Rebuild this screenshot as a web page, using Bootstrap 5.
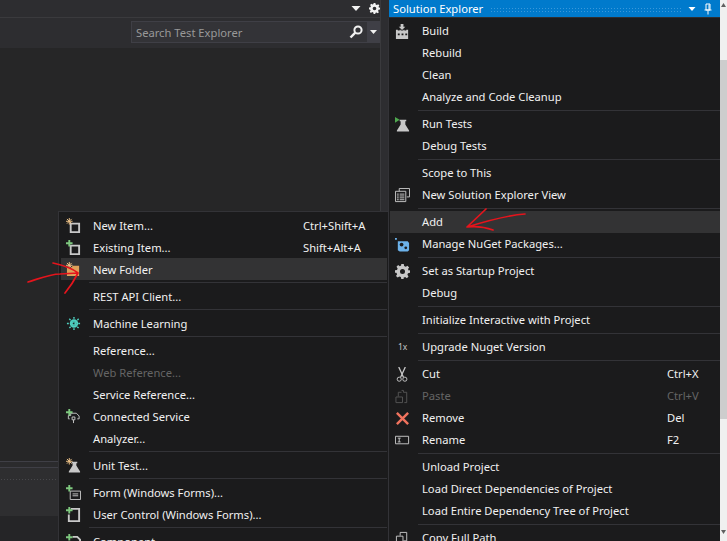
<!DOCTYPE html>
<html lang="en">
<head>
<meta charset="utf-8">
<title>Solution Explorer context menu</title>
<link href="https://cdn.jsdelivr.net/npm/bootstrap@5.3.0/dist/css/bootstrap.min.css" rel="stylesheet">
<style>
html,body{height:541px;overflow:hidden;background:#2d2d30;}
body{font-family:"Noto Sans","Open Sans",sans-serif;font-size:11.2px;color:#f1f1f1;line-height:23px;}
.ide{width:727px;height:541px;position:relative;overflow:hidden;}
.ide-left{width:381px;height:541px;background:#252526;border-right:1px solid #3a3a3d;}
.top-strip{height:18px;background:#2d2d30;gap:8px;border-bottom:1px solid #3a3a3d;}
.search-row{height:30px;background:#2d2d30;padding-top:3px;}
.search-box{width:249px;height:22px;margin-left:131px;background:#333337;border:1px solid #3f3f46;color:#999;line-height:22px;padding-left:4px;}
.search-go{width:12px;background:#3f3f46;}
.tool-a{height:413px;background:#262627;}
.lower-bar{height:7px;background:#2b2b2d;border-top:1px solid #3f3f46;border-bottom:1px solid #3f3f46;}
.lower-dots{height:48px;background-color:#2e2e30;background-image:radial-gradient(#47474b .6px,transparent .7px);background-size:3px 3px;background-repeat:repeat-x;background-position:0 10px;}
.lower-body{background:#252527;}
.se-head{position:absolute;left:389px;top:0;width:331px;height:17px;background:#007acc;color:#fff;line-height:23px;padding-left:4px;overflow:hidden;}
.se-dots{height:6px;margin:3px 7px 0 7px;background-image:radial-gradient(#3a98da .6px,transparent .7px);background-size:3px 3px;}
.scroll-track{position:absolute;left:720px;top:0;width:7px;height:541px;background:#f0f0f0;padding-top:60px;}
.scroll-thumb{height:359px;background:#cdcdcd;}
.scroll-arrow{position:absolute;left:1px;}
.arrow-up{top:3px;}
.arrow-down{bottom:7px;}
.ctx{position:absolute;background:#1b1b1c;}
.ctx-main{left:388px;top:18px;width:332px;height:523px;padding:2px 0 0 1px;border-left:1px solid #333337;line-height:22px;}
.ctx-sub{left:58px;top:211px;width:331px;height:330px;border:1px solid #333337;border-bottom:0;padding:2px 1px 0 2px;}
.mi{height:22px;white-space:nowrap;}
.mi.sel{background:#333334;}
.mi.off{color:#656565;}
.mi-ico{width:28px;flex:0 0 28px;height:22px;padding-left:5px;}
.mi-ico svg{width:15px;height:15px;}
.mi-txt{flex:1 1 auto;padding-left:4px;}
.mi-key{width:53px;flex:0 0 auto;}
.sub-key{width:84px;}
.msep{height:1px;background:#333337;margin:2px 0 2px 28px;}
.mini-x{font-size:8.500px;color:#c8c8c8;padding-left:3px;line-height:22px;display:block;}
.arrow-ink{position:absolute;left:0;top:0;pointer-events:none;}
svg{display:block;}
</style>
</head>
<body>
<div class="ide">
  <div class="ide-left d-flex flex-column">
    <div class="top-strip d-flex justify-content-end align-items-center">
      <svg width="10" height="5" viewBox="0 0 9 5"><path d="M0 0h9L4.500 5z" fill="#f1f1f1"/></svg>
      <svg width="11" height="11" viewBox="0 0 12 12"><path fill="#f1f1f1" fill-rule="evenodd" d="M5 0h2l.3 1.600 1.300.6L10 1.300l1.300 1.400-.9 1.300.5 1.100L12 5v2l-1.600.3-.5 1.300.9 1.400-1.300 1.300-1.400-.9-1.300.5L7 12H5l-.3-1.600-1.200-.5-1.400.9L.8 9.500l.9-1.300-.6-1.200L0 7V5l1.600-.3.5-1.200-.9-1.400L2.500.8l1.300.9 1.100-.5zM6 4a2 2 0 100 4 2 2 0 000-4z"/></svg>
    </div>
    <div class="search-row">
      <div class="search-box d-flex justify-content-between">
        <span>Search Test Explorer</span>
        <div class="d-flex align-items-center gap-1 h-100">
          <svg width="14" height="14" viewBox="0 0 14 14"><circle cx="9" cy="5" r="3.600" fill="none" stroke="#f1f1f1" stroke-width="2"/><path d="M6.300 7.700L1.500 12.500" stroke="#f1f1f1" stroke-width="2.400"/></svg>
          <div class="search-go d-flex align-items-center justify-content-center h-100"><svg width="7" height="4" viewBox="0 0 7 4"><path d="M0 0h7L3.500 4z" fill="#f1f1f1"/></svg></div>
        </div>
      </div>
    </div>
    <div class="tool-a"></div>
    <div class="lower-bar"></div>
    <div class="lower-dots"></div>
    <div class="lower-body flex-grow-1"></div>
  </div>

  <div class="se-head d-flex align-items-center">
    <span>Solution Explorer</span>
    <div class="se-dots flex-grow-1"></div>
    <svg class="me-2" width="8" height="4" viewBox="0 0 7 4"><path d="M0 0h7L3.500 4z" fill="#fff"/></svg>
    <svg class="me-2" width="8" height="12" viewBox="0 0 8 11"><path fill="none" stroke="#fff" d="M2 .5h4v6H2zM.5 6.500h7M4 7v4M5 1v5"/></svg>
  </div>

  <div class="scroll-track">
    <svg class="scroll-arrow arrow-up" width="5" height="4" viewBox="0 0 5 4"><path d="M0 4L2.500 0 5 4z" fill="#606060"/></svg>
    <div class="scroll-thumb"></div>
    <svg class="scroll-arrow arrow-down" width="5" height="4" viewBox="0 0 5 4"><path d="M0 0h5L2.500 4z" fill="#606060"/></svg>
  </div>

  <div class="ctx ctx-main">
    <div class="mi d-flex"><div class="mi-ico d-flex align-items-center"><svg viewBox="0 0 16 16"><path fill="#c8c8c8" d="M6 0h3v3h2L7.500 6.500 4 3h2zM1 6h2v1h2V6h1v1h3V6h1v1h2V6h2v10H1z"/><path fill="#1b1b1c" d="M3 10h2v2H3zM7 10h2v2H7zM11 10h2v2h-2z"/></svg></div><div class="mi-txt">Build</div></div>
    <div class="mi d-flex"><div class="mi-ico"></div><div class="mi-txt">Rebuild</div></div>
    <div class="mi d-flex"><div class="mi-ico"></div><div class="mi-txt">Clean</div></div>
    <div class="mi d-flex"><div class="mi-ico"></div><div class="mi-txt">Analyze and Code Cleanup</div></div>
    <div class="msep"></div>
    <div class="mi d-flex"><div class="mi-ico d-flex align-items-center"><svg viewBox="0 0 16 16"><path fill="#c8c8c8" d="M5 3h7v1.500h-1V8l4 6.500v1H2v-1L6 8V4.500H5z"/><path fill="#4ea74e" d="M0 0l5 3-5 3z"/></svg></div><div class="mi-txt">Run Tests</div></div>
    <div class="mi d-flex"><div class="mi-ico"></div><div class="mi-txt">Debug Tests</div></div>
    <div class="msep"></div>
    <div class="mi d-flex"><div class="mi-ico"></div><div class="mi-txt">Scope to This</div></div>
    <div class="mi d-flex"><div class="mi-ico d-flex align-items-center"><svg viewBox="0 0 16 16"><path fill="none" stroke="#c8c8c8" d="M4.500 3.500V.5h11v9h-3M.5 3.500h11v11H.500z"/><path stroke="#c8c8c8" d="M2 6.500h2M5 6.500h5M2 8.500h2M5 8.500h5M2 10.500h2M5 10.500h5M2 12.500h2M5 12.500h5"/></svg></div><div class="mi-txt">New Solution Explorer View</div></div>
    <div class="msep"></div>
    <div class="mi sel d-flex"><div class="mi-ico"></div><div class="mi-txt">Add</div></div>
    <div class="mi d-flex"><div class="mi-ico d-flex align-items-center"><svg viewBox="0 0 16 16"><path fill="#6cb2ea" d="M3 4.500h10.500l1.500 2V14l-1.500 1.500H5L3 14z"/><circle cx="7" cy="8" r="2" fill="#1b1b1c"/><circle cx="11.500" cy="11.500" r="1.500" fill="#1b1b1c"/><path fill="#6cb2ea" d="M0 1h2v2H0z"/></svg></div><div class="mi-txt">Manage NuGet Packages...</div></div>
    <div class="msep"></div>
    <div class="mi d-flex"><div class="mi-ico d-flex align-items-center"><svg viewBox="0 0 12 12"><path fill="#c8c8c8" fill-rule="evenodd" d="M5 0h2l.3 1.600 1.300.6L10 1.300l1.300 1.400-.9 1.300.5 1.100L12 5v2l-1.600.3-.5 1.300.9 1.400-1.300 1.300-1.400-.9-1.300.5L7 12H5l-.3-1.600-1.200-.5-1.400.9L.8 9.500l.9-1.300-.6-1.200L0 7V5l1.600-.3.5-1.200-.9-1.400L2.500.8l1.300.9 1.100-.5zM6 4a2 2 0 100 4 2 2 0 000-4z"/></svg></div><div class="mi-txt">Set as Startup Project</div></div>
    <div class="mi d-flex"><div class="mi-ico"></div><div class="mi-txt">Debug</div></div>
    <div class="msep"></div>
    <div class="mi d-flex"><div class="mi-ico"></div><div class="mi-txt">Initialize Interactive with Project</div></div>
    <div class="msep"></div>
    <div class="mi d-flex"><div class="mi-ico"><span class="mini-x">1x</span></div><div class="mi-txt">Upgrade Nuget Version</div></div>
    <div class="msep"></div>
    <div class="mi d-flex"><div class="mi-ico d-flex align-items-center"><svg viewBox="0 0 16 16"><path d="M4 0l5 11M11 0L6 11" stroke="#c8c8c8" stroke-width="1.400" fill="none"/><circle cx="4.500" cy="13" r="2.200" fill="none" stroke="#c8c8c8"/><circle cx="10.500" cy="13" r="2.200" fill="none" stroke="#c8c8c8"/></svg></div><div class="mi-txt">Cut</div><div class="mi-key">Ctrl+X</div></div>
    <div class="mi off d-flex"><div class="mi-ico d-flex align-items-center"><svg viewBox="0 0 16 16"><path fill="none" stroke="#555" d="M7 1.500h2v2h3.500v11H10M3.500 8V3.500H7M1 8.500h7v6H1z"/></svg></div><div class="mi-txt">Paste</div><div class="mi-key">Ctrl+V</div></div>
    <div class="mi d-flex"><div class="mi-ico d-flex align-items-center"><svg viewBox="0 0 16 16"><path d="M2 2l12 12M14 2L2 14" stroke="#f0735e" stroke-width="2.600"/></svg></div><div class="mi-txt">Remove</div><div class="mi-key">Del</div></div>
    <div class="mi d-flex"><div class="mi-ico d-flex align-items-center"><svg viewBox="0 0 16 16"><path fill="none" stroke="#c8c8c8" d="M.5 3.500h14v8H.5zM3 5.500h3M3 9.500h3M4.500 5.500v4"/></svg></div><div class="mi-txt">Rename</div><div class="mi-key">F2</div></div>
    <div class="msep"></div>
    <div class="mi d-flex"><div class="mi-ico"></div><div class="mi-txt">Unload Project</div></div>
    <div class="mi d-flex"><div class="mi-ico"></div><div class="mi-txt">Load Direct Dependencies of Project</div></div>
    <div class="mi d-flex"><div class="mi-ico"></div><div class="mi-txt">Load Entire Dependency Tree of Project</div></div>
    <div class="msep"></div>
    <div class="mi d-flex"><div class="mi-ico d-flex align-items-center"><svg viewBox="0 0 16 16"><path fill="none" stroke="#c8c8c8" d="M5.500 5V1.500h7v9H9M1.500 5.500h7v9h-7z"/></svg></div><div class="mi-txt">Copy Full Path</div></div>
  </div>

  <div class="ctx ctx-sub">
    <div class="mi d-flex"><div class="mi-ico d-flex align-items-center"><svg viewBox="0 0 16 16"><path fill="none" stroke="#c8c8c8" stroke-width="2" d="M5 6h9v9H5z"/><path stroke="#f3c68a" d="M3.500 0v7M0 3.500h7M1 1l5 5M6 1L1 6"/></svg></div><div class="mi-txt">New Item...</div><div class="mi-key sub-key">Ctrl+Shift+A</div></div>
    <div class="mi d-flex"><div class="mi-ico d-flex align-items-center"><svg viewBox="0 0 16 16"><path fill="none" stroke="#c8c8c8" stroke-width="2" d="M5 6h9v9H5z"/><path stroke="#7ec87e" stroke-width="2" d="M3.500 0v7M0 3.500h7"/></svg></div><div class="mi-txt">Existing Item...</div><div class="mi-key sub-key">Shift+Alt+A</div></div>
    <div class="mi sel d-flex"><div class="mi-ico d-flex align-items-center"><svg viewBox="0 0 16 16"><path fill="#dda15a" d="M1 6h5l1-2h7v11H1z"/><path stroke="#f3c68a" d="M3.500 0v7M0 3.500h7M1 1l5 5M6 1L1 6"/></svg></div><div class="mi-txt">New Folder</div></div>
    <div class="msep"></div>
    <div class="mi d-flex"><div class="mi-ico"></div><div class="mi-txt">REST API Client...</div></div>
    <div class="msep"></div>
    <div class="mi d-flex"><div class="mi-ico d-flex align-items-center"><svg viewBox="0 0 16 16"><circle cx="8.500" cy="8" r="3.500" fill="none" stroke="#4ed0c0" stroke-width="2"/><path stroke="#4ed0c0" stroke-width="1.500" stroke-dasharray="2 2" d="M8.500 1v14M1 8h14M3.500 3l10 10M13.500 3l-10 10"/></svg></div><div class="mi-txt">Machine Learning</div></div>
    <div class="msep"></div>
    <div class="mi d-flex"><div class="mi-ico"></div><div class="mi-txt">Reference...</div></div>
    <div class="mi off d-flex"><div class="mi-ico"></div><div class="mi-txt">Web Reference...</div></div>
    <div class="mi d-flex"><div class="mi-ico"></div><div class="mi-txt">Service Reference...</div></div>
    <div class="mi d-flex"><div class="mi-ico d-flex align-items-center"><svg viewBox="0 0 16 16"><path fill="none" stroke="#c8c8c8" d="M4 10.500H2.500V7H5V4.500h6l3 3V10.500h-2M6.500 8.500h3v3h-3zM8 11.500V15"/><path stroke="#7ec87e" stroke-width="2" d="M3.500 0v7M0 3.500h7"/></svg></div><div class="mi-txt">Connected Service</div></div>
    <div class="mi d-flex"><div class="mi-ico"></div><div class="mi-txt">Analyzer...</div></div>
    <div class="msep"></div>
    <div class="mi d-flex"><div class="mi-ico d-flex align-items-center"><svg viewBox="0 0 16 16"><path fill="#c8c8c8" d="M6 4h6v1.500h-1V8l4 6.500v1H3v-1L7 8V5.500H6z"/><path stroke="#f3c68a" d="M3.500 0v7M0 3.500h7M1 1l5 5M6 1L1 6"/></svg></div><div class="mi-txt">Unit Test...</div></div>
    <div class="msep"></div>
    <div class="mi d-flex"><div class="mi-ico d-flex align-items-center"><svg viewBox="0 0 16 16"><path fill="none" stroke="#c8c8c8" d="M4.500 6.500h11v9h-11zM7 9.500h6M7 11.500h6"/><path stroke="#7ec87e" stroke-width="2" d="M3.500 0v7M0 3.500h7"/></svg></div><div class="mi-txt">Form (Windows Forms)...</div></div>
    <div class="mi d-flex"><div class="mi-ico d-flex align-items-center"><svg viewBox="0 0 16 16"><path fill="none" stroke="#c8c8c8" stroke-width="2" d="M5 2h9v13H3V8"/><path stroke="#7ec87e" stroke-width="2" d="M3.500 0v7M0 3.500h7"/></svg></div><div class="mi-txt">User Control (Windows Forms)...</div></div>
    <div class="msep"></div>
    <div class="mi d-flex"><div class="mi-ico d-flex align-items-center"><svg viewBox="0 0 16 16"><path fill="none" stroke="#c8c8c8" stroke-width="2" d="M7 3h5l3 3v9H5V8"/><path stroke="#7ec87e" stroke-width="2" d="M3.500 0v7M0 3.500h7"/></svg></div><div class="mi-txt">Component</div></div>
  </div>

  <svg class="arrow-ink" width="727" height="541" viewBox="0 0 727 541" fill="none" stroke="#e5141c" stroke-width="1.700" stroke-linecap="round" stroke-linejoin="round">
    <path d="M525 214C510 215 490 220 467 227L486 209M467 227C475 226 485 227 493 230"/>
    <path d="M28 282C38 279 50 274 60 274L78 273C72 268 62 265 53 263M78 273C74 281 70 287 65 293"/>
  </svg>
</div>
<script src="https://cdn.jsdelivr.net/npm/bootstrap@5.3.0/dist/js/bootstrap.bundle.min.js"></script>
</body>
</html>
